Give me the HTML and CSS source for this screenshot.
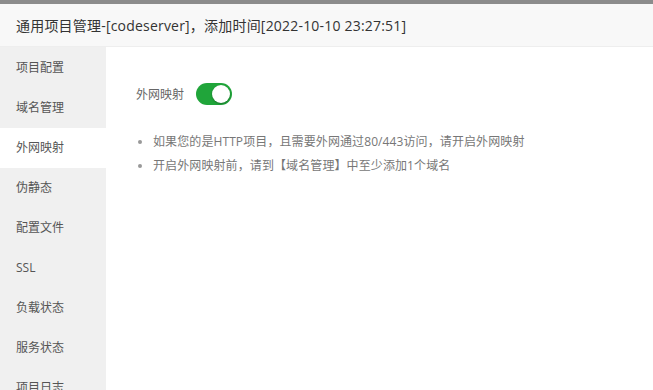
FILE: index.html
```html
<!DOCTYPE html>
<html lang="zh">
<head>
    <meta charset="UTF-8">
    <title>通用项目管理</title>
    <link rel="stylesheet" href="styles.css">
</head>
<body>
    <div class="topline"></div>
    <div class="header">通用项目管理-[codeserver]，添加时间[2022-10-10 23:27:51]</div>
    <div class="main">
        <ul class="menu">
            <li>项目配置</li>
            <li>域名管理</li>
            <li class="active">外网映射</li>
            <li>伪静态</li>
            <li>配置文件</li>
            <li>SSL</li>
            <li>负载状态</li>
            <li>服务状态</li>
            <li>项目日志</li>
        </ul>
        <div class="content">
            <div class="row">
                <span class="label">外网映射</span>
                <span class="switch"><span class="knob"></span></span>
            </div>
            <ul class="tips">
                <li>如果您的是HTTP项目，且需要外网通过80/443访问，请开启外网映射</li>
                <li>开启外网映射前，请到【域名管理】中至少添加1个域名</li>
            </ul>
        </div>
    </div>
</body>
</html>
```

FILE: styles.css
```css
body {
    margin: 0;
    font-family: "Open Sans", "Noto Sans CJK SC", sans-serif;
    background-color: #fff;
    overflow: hidden;
}
.topline {
    height: 4px;
    background-color: #8c8c8c;
}
.header {
    height: 42px;
    line-height: 43px;
    padding-left: 16px;
    font-size: 14px;
    letter-spacing: 0.2px;
    color: #333;
    background-color: #f8f8f8;
    border-bottom: 1px solid #eee;
}
.main {
    display: flex;
}
.menu {
    list-style: none;
    margin: 0;
    padding: 1px 0 0 0;
    width: 106px;
    background-color: #f0f0f0;
    height: 400px;
}
.menu li {
    height: 40px;
    line-height: 40px;
    padding-left: 16px;
    font-size: 12px;
    color: #555;
}
.menu li.active {
    background-color: #fff;
}
.content {
    flex: 1;
    padding: 36px 30px;
}
.row {
    display: flex;
    align-items: center;
    height: 22px;
}
.label {
    font-size: 12px;
    color: #666;
    margin-right: 12px;
}
.switch {
    position: relative;
    width: 36px;
    height: 22px;
    border-radius: 11px;
    background-color: #20a53a;
}
.knob {
    position: absolute;
    top: 2px;
    right: 2px;
    width: 18px;
    height: 18px;
    border-radius: 50%;
    background-color: #fff;
    box-shadow: 0 1px 2px rgba(0, 0, 0, 0.3);
}
.tips {
    margin: 25px 0 0 0;
    padding-left: 17px;
    font-size: 12px;
    letter-spacing: 0.1px;
    color: #777;
}
.tips li {
    line-height: 24px;
}
.tips li::marker {
    color: #999;
}
```
